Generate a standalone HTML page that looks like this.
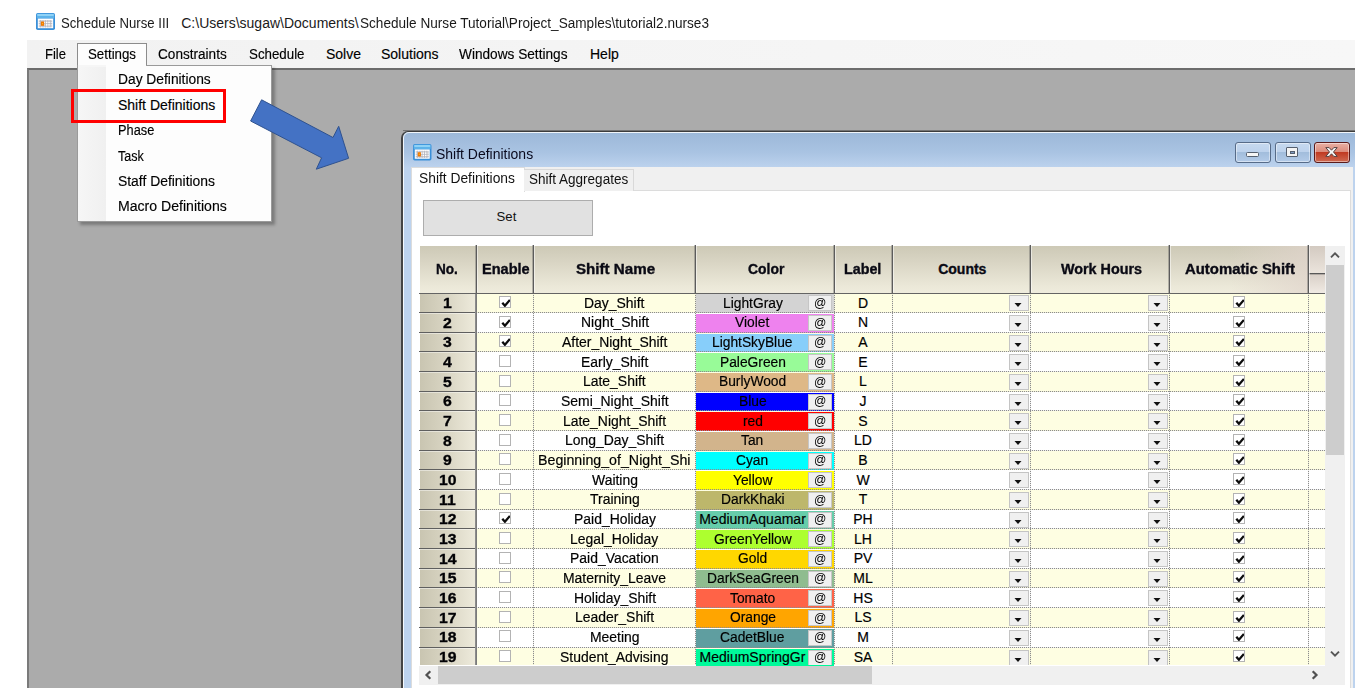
<!DOCTYPE html>
<html lang="en"><head><meta charset="utf-8"><title>Schedule Nurse III - Shift Definitions</title>
<style>
html,body{margin:0;padding:0;background:#fff;}
body{width:1359px;height:693px;position:relative;overflow:hidden;font-family:"Liberation Sans",sans-serif;}
#root div,#root span,#root svg{position:absolute;box-sizing:border-box;}
.t{white-space:nowrap;line-height:1;transform-origin:0 50%;display:block;}
.hb{-webkit-text-stroke:0.35px #0a0a14;}
.ct{-webkit-text-stroke:0.18px #000;}
.mt{-webkit-text-stroke:0.15px #000;}
</style></head><body><div id="root" style="position:absolute;left:0;top:0;width:1359px;height:693px;overflow:hidden">
<svg style="left:36px;top:13px" width="19" height="17" viewBox="0 0 19 17">
<rect x="0" y="0" width="19" height="17" rx="1.8" fill="#3a8fd8"/>
<rect x="0.8" y="0.8" width="17.4" height="4.6" rx="1" fill="#5db3ea"/>
<rect x="1.2" y="1" width="16.6" height="2" rx="0.8" fill="#8fd2f6"/>
<rect x="1.8" y="5.6" width="15.4" height="9.6" fill="#ffffff"/>
<rect x="2.8" y="7" width="13.4" height="7.4" fill="#e9e9ec"/>
<g stroke="#b4b4bc" stroke-width="0.8"><path d="M2.8 8.2H16.2M2.8 10.6H16.2M2.8 13H16.2M4.6 7V14.4M7 7V14.4M9.4 7V14.4M11.8 7V14.4M14.2 7V14.4"/></g>
<g fill="#ffffff"><rect x="5.2" y="8.8" width="1.3" height="1.3"/><rect x="7.6" y="8.8" width="1.3" height="1.3"/><rect x="10" y="8.8" width="1.3" height="1.3"/><rect x="12.4" y="8.8" width="1.3" height="1.3"/><rect x="10" y="11.2" width="1.3" height="1.3"/><rect x="12.4" y="11.2" width="1.3" height="1.3"/></g>
<rect x="4.9" y="8.5" width="3.2" height="4.3" fill="#f07800"/>
<rect x="5.9" y="10" width="1.2" height="1.2" fill="#ffb020"/>
</svg>
<span class="t " style="left:61.25px;top:15.75px;font-size:14px;color:#1a1a1a;transform:scaleX(0.9399);">Schedule Nurse III</span>
<span class="t " style="left:181.25px;top:15.75px;font-size:14px;color:#1a1a1a;">C:\Users\sugaw\Documents\</span>
<span class="t " style="left:359.70px;top:15.75px;font-size:14px;color:#1a1a1a;transform:scaleX(0.9707);">Schedule Nurse Tutorial\Project_Samples\tutorial2.nurse3</span>
<div style="left:27px;top:40px;width:1328px;height:28px;background:linear-gradient(90deg,#f2f2f2,#f7f7f7);"></div>
<div style="left:27px;top:68px;width:1328px;height:620px;background:#ababab;border-top:2px solid #6c6c6c;border-left:2px solid #7a7a7a;"></div>
<div style="left:77px;top:43px;width:70px;height:24px;background:#fdfdfd;border:1px solid #8c8c8c;border-bottom:none;"></div>
<span class="t mt" style="left:44.50px;top:47.05px;font-size:14px;transform:scaleX(0.9309);">File</span>
<span class="t mt" style="left:87.50px;top:47.05px;font-size:14px;transform:scaleX(0.9489);">Settings</span>
<span class="t mt" style="left:158.00px;top:47.05px;font-size:14px;transform:scaleX(0.9709);">Constraints</span>
<span class="t mt" style="left:248.75px;top:47.05px;font-size:14px;transform:scaleX(0.9507);">Schedule</span>
<span class="t mt" style="left:326.00px;top:47.05px;font-size:14px;">Solve</span>
<span class="t mt" style="left:381.00px;top:47.05px;font-size:14px;">Solutions</span>
<span class="t mt" style="left:459.00px;top:47.05px;font-size:14px;transform:scaleX(0.9751);">Windows Settings</span>
<span class="t mt" style="left:590.00px;top:47.05px;font-size:14px;">Help</span>
<div style="left:80px;top:68px;width:195px;height:157px;background:rgba(0,0,0,0.28);filter:blur(1.5px);"></div>
<div style="left:77px;top:65px;width:195px;height:157px;background:#fdfdfd;border:1px solid #9a9a9a;"></div>
<div style="left:147px;top:65px;width:124px;height:1px;background:#9a9a9a;"></div>
<div style="left:78px;top:66px;width:28px;height:155px;background:linear-gradient(90deg,#f6f6f6,#f0f0f0);"></div>
<div style="left:78px;top:65px;width:68px;height:2px;background:#fdfdfd;"></div>
<div style="left:78px;top:65px;width:28px;height:2px;background:#f6f6f6;"></div>
<span class="t mt" style="left:118.00px;top:72.35px;font-size:14px;transform:scaleX(0.9851);">Day Definitions</span>
<span class="t mt" style="left:118.00px;top:97.65px;font-size:14px;">Shift Definitions</span>
<span class="t mt" style="left:118.00px;top:123.15px;font-size:14px;transform:scaleX(0.9132);">Phase</span>
<span class="t mt" style="left:118.00px;top:148.85px;font-size:14px;transform:scaleX(0.8945);">Task</span>
<span class="t mt" style="left:118.00px;top:173.95px;font-size:14px;transform:scaleX(0.9919);">Staff Definitions</span>
<span class="t mt" style="left:118.00px;top:199.35px;font-size:14px;transform:scaleX(1.0055);">Macro Definitions</span>
<div style="left:71px;top:89px;width:155px;height:34px;border:3px solid #ff0000;"></div>
<svg style="left:240px;top:90px" width="120" height="90" viewBox="240 90 120 90">
<polygon points="261.6,99.8 333,137.5 338.7,126.3 348.6,158.3 316.3,169.2 321.6,157.8 250.6,121" fill="#4472c4" stroke="#2f528f" stroke-width="1" stroke-linejoin="miter"/>
</svg>
<div style="left:401px;top:130px;width:954px;height:558px;overflow:hidden;">
<div style="left:2px;top:0px;width:960px;height:1px;background:#747474;"></div>
<div style="left:0px;top:1px;width:970px;height:580px;background:linear-gradient(180deg,#9cb8d8 0px,#a9c3e2 20px,#bdd3ee 36px,#bdd3ee 100%);border:1px solid #3c3c3c;border-left:2px solid #444;border-radius:7px;"></div>
<div style="left:2px;top:2px;width:967px;height:578px;border:1px solid rgba(255,255,255,0.85);border-radius:6px;"></div>
<div style="left:0;top:0;width:0;height:0">
</div>
<svg style="left:12px;top:14px" width="18.5" height="16.5" viewBox="0 0 19 17">
<rect x="0" y="0" width="19" height="17" rx="1.8" fill="#3a8fd8"/>
<rect x="0.8" y="0.8" width="17.4" height="4.6" rx="1" fill="#5db3ea"/>
<rect x="1.2" y="1" width="16.6" height="2" rx="0.8" fill="#8fd2f6"/>
<rect x="1.8" y="5.6" width="15.4" height="9.6" fill="#ffffff"/>
<rect x="2.8" y="7" width="13.4" height="7.4" fill="#e9e9ec"/>
<g stroke="#b4b4bc" stroke-width="0.8"><path d="M2.8 8.2H16.2M2.8 10.6H16.2M2.8 13H16.2M4.6 7V14.4M7 7V14.4M9.4 7V14.4M11.8 7V14.4M14.2 7V14.4"/></g>
<g fill="#ffffff"><rect x="5.2" y="8.8" width="1.3" height="1.3"/><rect x="7.6" y="8.8" width="1.3" height="1.3"/><rect x="10" y="8.8" width="1.3" height="1.3"/><rect x="12.4" y="8.8" width="1.3" height="1.3"/><rect x="10" y="11.2" width="1.3" height="1.3"/><rect x="12.4" y="11.2" width="1.3" height="1.3"/></g>
<rect x="4.9" y="8.5" width="3.2" height="4.3" fill="#f07800"/>
<rect x="5.9" y="10" width="1.2" height="1.2" fill="#ffb020"/>
</svg>
<span class="t " style="left:34.60px;top:15.83px;font-size:15.2px;color:#0a0a1e;transform:scaleX(0.9204);">Shift Definitions</span>
<div style="left:834px;top:12px;width:36px;height:21px;background:linear-gradient(180deg,#c6d9ef 0%,#bdd2ec 45%,#a2bddc 50%,#b3cbe8 100%);border:1px solid #566b88;border-radius:3px;box-shadow:inset 0 0 0 1px rgba(255,255,255,0.45);"></div>
<div style="left:873.5px;top:12px;width:36px;height:21px;background:linear-gradient(180deg,#c6d9ef 0%,#bdd2ec 45%,#a2bddc 50%,#b3cbe8 100%);border:1px solid #566b88;border-radius:3px;box-shadow:inset 0 0 0 1px rgba(255,255,255,0.45);"></div>
<div style="left:912.5px;top:12px;width:36px;height:21px;background:linear-gradient(180deg,#e9b0a4 0%,#dc8c7c 45%,#c03a22 50%,#cf6a52 100%);border:1px solid #5a1a1a;border-radius:3px;box-shadow:inset 0 0 0 1px rgba(255,255,255,0.45);"></div>
<div style="left:845px;top:21.5px;width:13px;height:5.5px;background:#f6f6f6;border:1px solid #555f6e;border-radius:1.5px;"></div>
<div style="left:885px;top:17px;width:12px;height:10px;background:#f4f4f4;border:1px solid #555f6e;border-radius:1px;"></div>
<div style="left:888.5px;top:20.5px;width:5px;height:3px;background:#7f9cc4;border:1px solid #555f6e;"></div>
<svg style="left:923px;top:16px" width="15" height="12" viewBox="0 0 15 12"><path d="M1.8 1.6H5.2L7.5 4.2L9.8 1.6H13.2L9.5 6L13.2 10.4H9.8L7.5 7.8L5.2 10.4H1.8L5.5 6Z" fill="#f6f6f6" stroke="#55403f" stroke-width="1" stroke-linejoin="round"/></svg>
<div style="left:10px;top:37px;width:942px;height:540px;background:#f0f0f0;"></div>
<div style="left:10px;top:60px;width:939.5px;height:520px;background:#fff;border:1px solid #dcdcdc;"></div>
<div style="left:10px;top:37px;width:113.5px;height:24.5px;background:#fff;border:1px solid #dcdcdc;border-bottom:none;"></div>
<div style="left:123px;top:39px;width:109.7px;height:21.5px;background:#f0f0f0;border:1px solid #d9d9d9;border-bottom:none;border-left:none;"></div>
<span class="t " style="left:18.20px;top:40.51px;font-size:14.4px;color:#111;transform:scaleX(0.9595);">Shift Definitions</span>
<span class="t " style="left:128.20px;top:43.02px;font-size:13.8px;color:#111;transform:scaleX(0.9795);">Shift Aggregates</span>
<div style="left:22px;top:70px;width:170px;height:36px;background:#e1e1e1;border:1px solid #adadad;"></div>
<span class="t " style="left:95.50px;top:80.33px;font-size:13.2px;color:#111;">Set</span>
<div style="left:19px;top:116px;width:905px;height:47.39999999999998px;background:linear-gradient(180deg,#cdc9b6 0%,#d9d5c4 35%,#ebe8d8 85%,#efecdd 100%);"></div>
<div style="left:829px;top:116px;width:95px;height:47.39999999999998px;background:linear-gradient(90deg,rgba(224,212,204,0) 0%,rgba(224,212,204,0.6) 70%,rgba(224,212,204,0.9) 100%);"></div>
<div style="left:908px;top:116px;width:16px;height:27px;background:linear-gradient(180deg,#d3cac1,#ebe4dc);"></div>
<div style="left:908px;top:145px;width:16px;height:18px;background:linear-gradient(180deg,#dad1c9,#f0eae3);"></div>
<div style="left:908px;top:143px;width:16px;height:1px;background:#585858;"></div>
<div style="left:908px;top:144px;width:16px;height:1px;background:rgba(90,90,90,0.35);"></div>
<div style="left:908px;top:116px;width:16px;height:4px;background:rgba(255,255,255,0.0);"></div>
<div style="left:75px;top:163px;width:849px;height:20px;background:#fefee2;"></div>
<div style="left:19px;top:163px;width:56px;height:20px;background:linear-gradient(90deg,#c9c5b1 0%,#d8d4c2 45%,#eeebdc 100%);"></div>
<div style="left:75px;top:183px;width:849px;height:20px;background:#ffffff;"></div>
<div style="left:19px;top:183px;width:56px;height:20px;background:linear-gradient(90deg,#c9c5b1 0%,#d8d4c2 45%,#eeebdc 100%);"></div>
<div style="left:75px;top:203px;width:849px;height:19px;background:#fefee2;"></div>
<div style="left:19px;top:203px;width:56px;height:19px;background:linear-gradient(90deg,#c9c5b1 0%,#d8d4c2 45%,#eeebdc 100%);"></div>
<div style="left:75px;top:222px;width:849px;height:20px;background:#ffffff;"></div>
<div style="left:19px;top:222px;width:56px;height:20px;background:linear-gradient(90deg,#c9c5b1 0%,#d8d4c2 45%,#eeebdc 100%);"></div>
<div style="left:75px;top:242px;width:849px;height:20px;background:#fefee2;"></div>
<div style="left:19px;top:242px;width:56px;height:20px;background:linear-gradient(90deg,#c9c5b1 0%,#d8d4c2 45%,#eeebdc 100%);"></div>
<div style="left:75px;top:262px;width:849px;height:19px;background:#ffffff;"></div>
<div style="left:19px;top:262px;width:56px;height:19px;background:linear-gradient(90deg,#c9c5b1 0%,#d8d4c2 45%,#eeebdc 100%);"></div>
<div style="left:75px;top:281px;width:849px;height:20px;background:#fefee2;"></div>
<div style="left:19px;top:281px;width:56px;height:20px;background:linear-gradient(90deg,#c9c5b1 0%,#d8d4c2 45%,#eeebdc 100%);"></div>
<div style="left:75px;top:301px;width:849px;height:20px;background:#ffffff;"></div>
<div style="left:19px;top:301px;width:56px;height:20px;background:linear-gradient(90deg,#c9c5b1 0%,#d8d4c2 45%,#eeebdc 100%);"></div>
<div style="left:75px;top:321px;width:849px;height:19px;background:#fefee2;"></div>
<div style="left:19px;top:321px;width:56px;height:19px;background:linear-gradient(90deg,#c9c5b1 0%,#d8d4c2 45%,#eeebdc 100%);"></div>
<div style="left:75px;top:340px;width:849px;height:20px;background:#ffffff;"></div>
<div style="left:19px;top:340px;width:56px;height:20px;background:linear-gradient(90deg,#c9c5b1 0%,#d8d4c2 45%,#eeebdc 100%);"></div>
<div style="left:75px;top:360px;width:849px;height:20px;background:#fefee2;"></div>
<div style="left:19px;top:360px;width:56px;height:20px;background:linear-gradient(90deg,#c9c5b1 0%,#d8d4c2 45%,#eeebdc 100%);"></div>
<div style="left:75px;top:380px;width:849px;height:19px;background:#ffffff;"></div>
<div style="left:19px;top:380px;width:56px;height:19px;background:linear-gradient(90deg,#c9c5b1 0%,#d8d4c2 45%,#eeebdc 100%);"></div>
<div style="left:75px;top:399px;width:849px;height:20px;background:#fefee2;"></div>
<div style="left:19px;top:399px;width:56px;height:20px;background:linear-gradient(90deg,#c9c5b1 0%,#d8d4c2 45%,#eeebdc 100%);"></div>
<div style="left:75px;top:419px;width:849px;height:20px;background:#ffffff;"></div>
<div style="left:19px;top:419px;width:56px;height:20px;background:linear-gradient(90deg,#c9c5b1 0%,#d8d4c2 45%,#eeebdc 100%);"></div>
<div style="left:75px;top:439px;width:849px;height:19px;background:#fefee2;"></div>
<div style="left:19px;top:439px;width:56px;height:19px;background:linear-gradient(90deg,#c9c5b1 0%,#d8d4c2 45%,#eeebdc 100%);"></div>
<div style="left:75px;top:458px;width:849px;height:20px;background:#ffffff;"></div>
<div style="left:19px;top:458px;width:56px;height:20px;background:linear-gradient(90deg,#c9c5b1 0%,#d8d4c2 45%,#eeebdc 100%);"></div>
<div style="left:75px;top:478px;width:849px;height:20px;background:#fefee2;"></div>
<div style="left:19px;top:478px;width:56px;height:20px;background:linear-gradient(90deg,#c9c5b1 0%,#d8d4c2 45%,#eeebdc 100%);"></div>
<div style="left:75px;top:498px;width:849px;height:20px;background:#ffffff;"></div>
<div style="left:19px;top:498px;width:56px;height:20px;background:linear-gradient(90deg,#c9c5b1 0%,#d8d4c2 45%,#eeebdc 100%);"></div>
<div style="left:75px;top:518px;width:849px;height:17.299999999999955px;background:#fefee2;"></div>
<div style="left:19px;top:518px;width:56px;height:17.299999999999955px;background:linear-gradient(90deg,#c9c5b1 0%,#d8d4c2 45%,#eeebdc 100%);"></div>
<div style="left:295px;top:164px;width:138px;height:19px;background:#d3d3d3;"></div>
<div style="left:407px;top:165px;width:24px;height:16px;background:#f0f0f0;border:1px solid #c6c6c6;"></div>
<div style="left:98px;top:166px;width:12px;height:12px;background:#fff;border:1px solid #b3b3b3;overflow:hidden;"><svg style="left:1px;top:1px" width="10" height="10" viewBox="0 0 10 10"><path d="M1.3 4.7L3.9 7.7L8.9 1.9" fill="none" stroke="#0c0c0c" stroke-width="2.3" stroke-linejoin="miter"/></svg></div>
<div style="left:831.5px;top:166px;width:12px;height:12px;background:#fff;border:1px solid #b3b3b3;overflow:hidden;"><svg style="left:1px;top:1px" width="10" height="10" viewBox="0 0 10 10"><path d="M1.3 4.7L3.9 7.7L8.9 1.9" fill="none" stroke="#0c0c0c" stroke-width="2.3" stroke-linejoin="miter"/></svg></div>
<div style="left:608px;top:165px;width:20px;height:16px;background:#f0f0f0;border:1px solid #c4c4c4;overflow:hidden;"><svg style="left:4.3px;top:6.8px" width="8" height="4" viewBox="0 0 8 4"><path d="M0.5 0H7.5L4 4Z" fill="#111"/></svg></div>
<div style="left:747px;top:165px;width:20px;height:16px;background:#f0f0f0;border:1px solid #c4c4c4;overflow:hidden;"><svg style="left:4.3px;top:6.8px" width="8" height="4" viewBox="0 0 8 4"><path d="M0.5 0H7.5L4 4Z" fill="#111"/></svg></div>
<span class="t hb" style="left:42.41px;top:166.04px;font-size:14.9px;font-weight:bold;transform:scaleX(1.0600);">1</span>
<span class="t ct" style="left:183.40px;top:165.70px;font-size:14px;transform:scaleX(0.9950);">Day_Shift</span>
<span class="t ct" style="left:321.61px;top:165.70px;font-size:14px;transform:scaleX(0.9850);">LightGray</span>
<span class="t " style="left:412.63px;top:165.92px;font-size:13.5px;transform:scaleX(0.9000);">@</span>
<span class="t ct" style="left:456.94px;top:165.70px;font-size:14px;">D</span>
<div style="left:295px;top:184px;width:138px;height:19px;background:#ee82ee;"></div>
<div style="left:407px;top:185px;width:24px;height:16px;background:#f0f0f0;border:1px solid #c6c6c6;"></div>
<div style="left:98px;top:186px;width:12px;height:12px;background:#fff;border:1px solid #b3b3b3;overflow:hidden;"><svg style="left:1px;top:1px" width="10" height="10" viewBox="0 0 10 10"><path d="M1.3 4.7L3.9 7.7L8.9 1.9" fill="none" stroke="#0c0c0c" stroke-width="2.3" stroke-linejoin="miter"/></svg></div>
<div style="left:831.5px;top:186px;width:12px;height:12px;background:#fff;border:1px solid #b3b3b3;overflow:hidden;"><svg style="left:1px;top:1px" width="10" height="10" viewBox="0 0 10 10"><path d="M1.3 4.7L3.9 7.7L8.9 1.9" fill="none" stroke="#0c0c0c" stroke-width="2.3" stroke-linejoin="miter"/></svg></div>
<div style="left:608px;top:185px;width:20px;height:16px;background:#f0f0f0;border:1px solid #c4c4c4;overflow:hidden;"><svg style="left:4.3px;top:6.8px" width="8" height="4" viewBox="0 0 8 4"><path d="M0.5 0H7.5L4 4Z" fill="#111"/></svg></div>
<div style="left:747px;top:185px;width:20px;height:16px;background:#f0f0f0;border:1px solid #c4c4c4;overflow:hidden;"><svg style="left:4.3px;top:6.8px" width="8" height="4" viewBox="0 0 8 4"><path d="M0.5 0H7.5L4 4Z" fill="#111"/></svg></div>
<span class="t hb" style="left:42.41px;top:185.71px;font-size:14.9px;font-weight:bold;transform:scaleX(1.0600);">2</span>
<span class="t ct" style="left:179.53px;top:185.37px;font-size:14px;transform:scaleX(0.9950);">Night_Shift</span>
<span class="t ct" style="left:334.38px;top:185.37px;font-size:14px;transform:scaleX(0.9850);">Violet</span>
<span class="t " style="left:412.63px;top:185.59px;font-size:13.5px;transform:scaleX(0.9000);">@</span>
<span class="t ct" style="left:456.94px;top:185.37px;font-size:14px;">N</span>
<div style="left:295px;top:204px;width:138px;height:18px;background:#87cefa;"></div>
<div style="left:407px;top:205px;width:24px;height:16px;background:#f0f0f0;border:1px solid #c6c6c6;"></div>
<div style="left:98px;top:205px;width:12px;height:12px;background:#fff;border:1px solid #b3b3b3;overflow:hidden;"><svg style="left:1px;top:1px" width="10" height="10" viewBox="0 0 10 10"><path d="M1.3 4.7L3.9 7.7L8.9 1.9" fill="none" stroke="#0c0c0c" stroke-width="2.3" stroke-linejoin="miter"/></svg></div>
<div style="left:831.5px;top:205px;width:12px;height:12px;background:#fff;border:1px solid #b3b3b3;overflow:hidden;"><svg style="left:1px;top:1px" width="10" height="10" viewBox="0 0 10 10"><path d="M1.3 4.7L3.9 7.7L8.9 1.9" fill="none" stroke="#0c0c0c" stroke-width="2.3" stroke-linejoin="miter"/></svg></div>
<div style="left:608px;top:205px;width:20px;height:16px;background:#f0f0f0;border:1px solid #c4c4c4;overflow:hidden;"><svg style="left:4.3px;top:6.8px" width="8" height="4" viewBox="0 0 8 4"><path d="M0.5 0H7.5L4 4Z" fill="#111"/></svg></div>
<div style="left:747px;top:205px;width:20px;height:16px;background:#f0f0f0;border:1px solid #c4c4c4;overflow:hidden;"><svg style="left:4.3px;top:6.8px" width="8" height="4" viewBox="0 0 8 4"><path d="M0.5 0H7.5L4 4Z" fill="#111"/></svg></div>
<span class="t hb" style="left:42.41px;top:205.38px;font-size:14.9px;font-weight:bold;transform:scaleX(1.0600);">3</span>
<span class="t ct" style="left:160.95px;top:205.04px;font-size:14px;transform:scaleX(0.9950);">After_Night_Shift</span>
<span class="t ct" style="left:311.25px;top:205.04px;font-size:14px;transform:scaleX(0.9850);">LightSkyBlue</span>
<span class="t " style="left:412.63px;top:205.26px;font-size:13.5px;transform:scaleX(0.9000);">@</span>
<span class="t ct" style="left:457.33px;top:205.04px;font-size:14px;">A</span>
<div style="left:295px;top:223px;width:138px;height:19px;background:#98fb98;"></div>
<div style="left:407px;top:224px;width:24px;height:16px;background:#f0f0f0;border:1px solid #c6c6c6;"></div>
<div style="left:98px;top:225px;width:12px;height:12px;background:#fff;border:1px solid #b3b3b3;overflow:hidden;"></div>
<div style="left:831.5px;top:225px;width:12px;height:12px;background:#fff;border:1px solid #b3b3b3;overflow:hidden;"><svg style="left:1px;top:1px" width="10" height="10" viewBox="0 0 10 10"><path d="M1.3 4.7L3.9 7.7L8.9 1.9" fill="none" stroke="#0c0c0c" stroke-width="2.3" stroke-linejoin="miter"/></svg></div>
<div style="left:608px;top:224px;width:20px;height:16px;background:#f0f0f0;border:1px solid #c4c4c4;overflow:hidden;"><svg style="left:4.3px;top:6.8px" width="8" height="4" viewBox="0 0 8 4"><path d="M0.5 0H7.5L4 4Z" fill="#111"/></svg></div>
<div style="left:747px;top:224px;width:20px;height:16px;background:#f0f0f0;border:1px solid #c4c4c4;overflow:hidden;"><svg style="left:4.3px;top:6.8px" width="8" height="4" viewBox="0 0 8 4"><path d="M0.5 0H7.5L4 4Z" fill="#111"/></svg></div>
<span class="t hb" style="left:42.41px;top:225.05px;font-size:14.9px;font-weight:bold;transform:scaleX(1.0600);">4</span>
<span class="t ct" style="left:179.92px;top:224.71px;font-size:14px;transform:scaleX(0.9950);">Early_Shift</span>
<span class="t ct" style="left:318.54px;top:224.71px;font-size:14px;transform:scaleX(0.9850);">PaleGreen</span>
<span class="t " style="left:412.63px;top:224.93px;font-size:13.5px;transform:scaleX(0.9000);">@</span>
<span class="t ct" style="left:457.33px;top:224.71px;font-size:14px;">E</span>
<div style="left:295px;top:243px;width:138px;height:19px;background:#deb887;"></div>
<div style="left:407px;top:244px;width:24px;height:16px;background:#f0f0f0;border:1px solid #c6c6c6;"></div>
<div style="left:98px;top:245px;width:12px;height:12px;background:#fff;border:1px solid #b3b3b3;overflow:hidden;"></div>
<div style="left:831.5px;top:245px;width:12px;height:12px;background:#fff;border:1px solid #b3b3b3;overflow:hidden;"><svg style="left:1px;top:1px" width="10" height="10" viewBox="0 0 10 10"><path d="M1.3 4.7L3.9 7.7L8.9 1.9" fill="none" stroke="#0c0c0c" stroke-width="2.3" stroke-linejoin="miter"/></svg></div>
<div style="left:608px;top:244px;width:20px;height:16px;background:#f0f0f0;border:1px solid #c4c4c4;overflow:hidden;"><svg style="left:4.3px;top:6.8px" width="8" height="4" viewBox="0 0 8 4"><path d="M0.5 0H7.5L4 4Z" fill="#111"/></svg></div>
<div style="left:747px;top:244px;width:20px;height:16px;background:#f0f0f0;border:1px solid #c4c4c4;overflow:hidden;"><svg style="left:4.3px;top:6.8px" width="8" height="4" viewBox="0 0 8 4"><path d="M0.5 0H7.5L4 4Z" fill="#111"/></svg></div>
<span class="t hb" style="left:42.41px;top:244.72px;font-size:14.9px;font-weight:bold;transform:scaleX(1.0600);">5</span>
<span class="t ct" style="left:182.23px;top:244.38px;font-size:14px;transform:scaleX(0.9950);">Late_Shift</span>
<span class="t ct" style="left:317.90px;top:244.38px;font-size:14px;transform:scaleX(0.9850);">BurlyWood</span>
<span class="t " style="left:412.63px;top:244.60px;font-size:13.5px;transform:scaleX(0.9000);">@</span>
<span class="t ct" style="left:458.11px;top:244.38px;font-size:14px;">L</span>
<div style="left:295px;top:263px;width:138px;height:18px;background:#0000ff;"></div>
<div style="left:407px;top:264px;width:24px;height:16px;background:#f0f0f0;border:1px solid #c6c6c6;"></div>
<div style="left:98px;top:264px;width:12px;height:12px;background:#fff;border:1px solid #b3b3b3;overflow:hidden;"></div>
<div style="left:831.5px;top:264px;width:12px;height:12px;background:#fff;border:1px solid #b3b3b3;overflow:hidden;"><svg style="left:1px;top:1px" width="10" height="10" viewBox="0 0 10 10"><path d="M1.3 4.7L3.9 7.7L8.9 1.9" fill="none" stroke="#0c0c0c" stroke-width="2.3" stroke-linejoin="miter"/></svg></div>
<div style="left:608px;top:264px;width:20px;height:16px;background:#f0f0f0;border:1px solid #c4c4c4;overflow:hidden;"><svg style="left:4.3px;top:6.8px" width="8" height="4" viewBox="0 0 8 4"><path d="M0.5 0H7.5L4 4Z" fill="#111"/></svg></div>
<div style="left:747px;top:264px;width:20px;height:16px;background:#f0f0f0;border:1px solid #c4c4c4;overflow:hidden;"><svg style="left:4.3px;top:6.8px" width="8" height="4" viewBox="0 0 8 4"><path d="M0.5 0H7.5L4 4Z" fill="#111"/></svg></div>
<span class="t hb" style="left:42.41px;top:264.39px;font-size:14.9px;font-weight:bold;transform:scaleX(1.0600);">6</span>
<span class="t ct" style="left:159.79px;top:264.05px;font-size:14px;transform:scaleX(0.9950);">Semi_Night_Shift</span>
<span class="t ct" style="left:337.70px;top:264.05px;font-size:14px;transform:scaleX(0.9850);">Blue</span>
<span class="t " style="left:412.63px;top:264.27px;font-size:13.5px;transform:scaleX(0.9000);">@</span>
<span class="t ct" style="left:458.50px;top:264.05px;font-size:14px;">J</span>
<div style="left:295px;top:282px;width:138px;height:19px;background:#ff0000;"></div>
<div style="left:407px;top:283px;width:24px;height:16px;background:#f0f0f0;border:1px solid #c6c6c6;"></div>
<div style="left:98px;top:284px;width:12px;height:12px;background:#fff;border:1px solid #b3b3b3;overflow:hidden;"></div>
<div style="left:831.5px;top:284px;width:12px;height:12px;background:#fff;border:1px solid #b3b3b3;overflow:hidden;"><svg style="left:1px;top:1px" width="10" height="10" viewBox="0 0 10 10"><path d="M1.3 4.7L3.9 7.7L8.9 1.9" fill="none" stroke="#0c0c0c" stroke-width="2.3" stroke-linejoin="miter"/></svg></div>
<div style="left:608px;top:283px;width:20px;height:16px;background:#f0f0f0;border:1px solid #c4c4c4;overflow:hidden;"><svg style="left:4.3px;top:6.8px" width="8" height="4" viewBox="0 0 8 4"><path d="M0.5 0H7.5L4 4Z" fill="#111"/></svg></div>
<div style="left:747px;top:283px;width:20px;height:16px;background:#f0f0f0;border:1px solid #c4c4c4;overflow:hidden;"><svg style="left:4.3px;top:6.8px" width="8" height="4" viewBox="0 0 8 4"><path d="M0.5 0H7.5L4 4Z" fill="#111"/></svg></div>
<span class="t hb" style="left:42.41px;top:284.06px;font-size:14.9px;font-weight:bold;transform:scaleX(1.0600);">7</span>
<span class="t ct" style="left:162.10px;top:283.72px;font-size:14px;transform:scaleX(0.9950);">Late_Night_Shift</span>
<span class="t ct" style="left:341.53px;top:283.72px;font-size:14px;transform:scaleX(0.9850);">red</span>
<span class="t " style="left:412.63px;top:283.94px;font-size:13.5px;transform:scaleX(0.9000);">@</span>
<span class="t ct" style="left:457.33px;top:283.72px;font-size:14px;">S</span>
<div style="left:295px;top:302px;width:138px;height:19px;background:#d2b48c;"></div>
<div style="left:407px;top:303px;width:24px;height:16px;background:#f0f0f0;border:1px solid #c6c6c6;"></div>
<div style="left:98px;top:304px;width:12px;height:12px;background:#fff;border:1px solid #b3b3b3;overflow:hidden;"></div>
<div style="left:831.5px;top:304px;width:12px;height:12px;background:#fff;border:1px solid #b3b3b3;overflow:hidden;"><svg style="left:1px;top:1px" width="10" height="10" viewBox="0 0 10 10"><path d="M1.3 4.7L3.9 7.7L8.9 1.9" fill="none" stroke="#0c0c0c" stroke-width="2.3" stroke-linejoin="miter"/></svg></div>
<div style="left:608px;top:303px;width:20px;height:16px;background:#f0f0f0;border:1px solid #c4c4c4;overflow:hidden;"><svg style="left:4.3px;top:6.8px" width="8" height="4" viewBox="0 0 8 4"><path d="M0.5 0H7.5L4 4Z" fill="#111"/></svg></div>
<div style="left:747px;top:303px;width:20px;height:16px;background:#f0f0f0;border:1px solid #c4c4c4;overflow:hidden;"><svg style="left:4.3px;top:6.8px" width="8" height="4" viewBox="0 0 8 4"><path d="M0.5 0H7.5L4 4Z" fill="#111"/></svg></div>
<span class="t hb" style="left:42.41px;top:303.73px;font-size:14.9px;font-weight:bold;transform:scaleX(1.0600);">8</span>
<span class="t ct" style="left:164.03px;top:303.39px;font-size:14px;transform:scaleX(0.9950);">Long_Day_Shift</span>
<span class="t ct" style="left:340.38px;top:303.39px;font-size:14px;transform:scaleX(0.9850);">Tan</span>
<span class="t " style="left:412.63px;top:303.61px;font-size:13.5px;transform:scaleX(0.9000);">@</span>
<span class="t ct" style="left:453.05px;top:303.39px;font-size:14px;">LD</span>
<div style="left:295px;top:322px;width:138px;height:18px;background:#00ffff;"></div>
<div style="left:407px;top:323px;width:24px;height:16px;background:#f0f0f0;border:1px solid #c6c6c6;"></div>
<div style="left:98px;top:323px;width:12px;height:12px;background:#fff;border:1px solid #b3b3b3;overflow:hidden;"></div>
<div style="left:831.5px;top:323px;width:12px;height:12px;background:#fff;border:1px solid #b3b3b3;overflow:hidden;"><svg style="left:1px;top:1px" width="10" height="10" viewBox="0 0 10 10"><path d="M1.3 4.7L3.9 7.7L8.9 1.9" fill="none" stroke="#0c0c0c" stroke-width="2.3" stroke-linejoin="miter"/></svg></div>
<div style="left:608px;top:323px;width:20px;height:16px;background:#f0f0f0;border:1px solid #c4c4c4;overflow:hidden;"><svg style="left:4.3px;top:6.8px" width="8" height="4" viewBox="0 0 8 4"><path d="M0.5 0H7.5L4 4Z" fill="#111"/></svg></div>
<div style="left:747px;top:323px;width:20px;height:16px;background:#f0f0f0;border:1px solid #c4c4c4;overflow:hidden;"><svg style="left:4.3px;top:6.8px" width="8" height="4" viewBox="0 0 8 4"><path d="M0.5 0H7.5L4 4Z" fill="#111"/></svg></div>
<span class="t hb" style="left:42.41px;top:323.40px;font-size:14.9px;font-weight:bold;transform:scaleX(1.0600);">9</span>
<span class="t ct" style="left:137.36px;top:323.06px;font-size:14px;transform:scaleX(1.0150);">Beginning_of_Night_Shi</span>
<span class="t ct" style="left:335.40px;top:323.06px;font-size:14px;transform:scaleX(0.9850);">Cyan</span>
<span class="t " style="left:412.63px;top:323.28px;font-size:13.5px;transform:scaleX(0.9000);">@</span>
<span class="t ct" style="left:457.33px;top:323.06px;font-size:14px;">B</span>
<div style="left:295px;top:341px;width:138px;height:19px;background:#ffff00;"></div>
<div style="left:407px;top:342px;width:24px;height:16px;background:#f0f0f0;border:1px solid #c6c6c6;"></div>
<div style="left:98px;top:343px;width:12px;height:12px;background:#fff;border:1px solid #b3b3b3;overflow:hidden;"></div>
<div style="left:831.5px;top:343px;width:12px;height:12px;background:#fff;border:1px solid #b3b3b3;overflow:hidden;"><svg style="left:1px;top:1px" width="10" height="10" viewBox="0 0 10 10"><path d="M1.3 4.7L3.9 7.7L8.9 1.9" fill="none" stroke="#0c0c0c" stroke-width="2.3" stroke-linejoin="miter"/></svg></div>
<div style="left:608px;top:342px;width:20px;height:16px;background:#f0f0f0;border:1px solid #c4c4c4;overflow:hidden;"><svg style="left:4.3px;top:6.8px" width="8" height="4" viewBox="0 0 8 4"><path d="M0.5 0H7.5L4 4Z" fill="#111"/></svg></div>
<div style="left:747px;top:342px;width:20px;height:16px;background:#f0f0f0;border:1px solid #c4c4c4;overflow:hidden;"><svg style="left:4.3px;top:6.8px" width="8" height="4" viewBox="0 0 8 4"><path d="M0.5 0H7.5L4 4Z" fill="#111"/></svg></div>
<span class="t hb" style="left:38.02px;top:343.07px;font-size:14.9px;font-weight:bold;transform:scaleX(1.0600);">10</span>
<span class="t ct" style="left:190.63px;top:342.73px;font-size:14px;transform:scaleX(0.9950);">Waiting</span>
<span class="t ct" style="left:331.82px;top:342.73px;font-size:14px;transform:scaleX(0.9850);">Yellow</span>
<span class="t " style="left:412.63px;top:342.95px;font-size:13.5px;transform:scaleX(0.9000);">@</span>
<span class="t ct" style="left:455.39px;top:342.73px;font-size:14px;">W</span>
<div style="left:295px;top:361px;width:138px;height:19px;background:#bdb76b;"></div>
<div style="left:407px;top:362px;width:24px;height:16px;background:#f0f0f0;border:1px solid #c6c6c6;"></div>
<div style="left:98px;top:363px;width:12px;height:12px;background:#fff;border:1px solid #b3b3b3;overflow:hidden;"></div>
<div style="left:831.5px;top:363px;width:12px;height:12px;background:#fff;border:1px solid #b3b3b3;overflow:hidden;"><svg style="left:1px;top:1px" width="10" height="10" viewBox="0 0 10 10"><path d="M1.3 4.7L3.9 7.7L8.9 1.9" fill="none" stroke="#0c0c0c" stroke-width="2.3" stroke-linejoin="miter"/></svg></div>
<div style="left:608px;top:362px;width:20px;height:16px;background:#f0f0f0;border:1px solid #c4c4c4;overflow:hidden;"><svg style="left:4.3px;top:6.8px" width="8" height="4" viewBox="0 0 8 4"><path d="M0.5 0H7.5L4 4Z" fill="#111"/></svg></div>
<div style="left:747px;top:362px;width:20px;height:16px;background:#f0f0f0;border:1px solid #c4c4c4;overflow:hidden;"><svg style="left:4.3px;top:6.8px" width="8" height="4" viewBox="0 0 8 4"><path d="M0.5 0H7.5L4 4Z" fill="#111"/></svg></div>
<span class="t hb" style="left:38.45px;top:362.74px;font-size:14.9px;font-weight:bold;transform:scaleX(1.0600);">11</span>
<span class="t ct" style="left:188.69px;top:362.40px;font-size:14px;transform:scaleX(0.9950);">Training</span>
<span class="t ct" style="left:319.69px;top:362.40px;font-size:14px;transform:scaleX(0.9850);">DarkKhaki</span>
<span class="t " style="left:412.63px;top:362.62px;font-size:13.5px;transform:scaleX(0.9000);">@</span>
<span class="t ct" style="left:457.72px;top:362.40px;font-size:14px;">T</span>
<div style="left:295px;top:381px;width:138px;height:18px;background:#66cdaa;"></div>
<div style="left:407px;top:382px;width:24px;height:16px;background:#f0f0f0;border:1px solid #c6c6c6;"></div>
<div style="left:98px;top:382px;width:12px;height:12px;background:#fff;border:1px solid #b3b3b3;overflow:hidden;"><svg style="left:1px;top:1px" width="10" height="10" viewBox="0 0 10 10"><path d="M1.3 4.7L3.9 7.7L8.9 1.9" fill="none" stroke="#0c0c0c" stroke-width="2.3" stroke-linejoin="miter"/></svg></div>
<div style="left:831.5px;top:382px;width:12px;height:12px;background:#fff;border:1px solid #b3b3b3;overflow:hidden;"><svg style="left:1px;top:1px" width="10" height="10" viewBox="0 0 10 10"><path d="M1.3 4.7L3.9 7.7L8.9 1.9" fill="none" stroke="#0c0c0c" stroke-width="2.3" stroke-linejoin="miter"/></svg></div>
<div style="left:608px;top:382px;width:20px;height:16px;background:#f0f0f0;border:1px solid #c4c4c4;overflow:hidden;"><svg style="left:4.3px;top:6.8px" width="8" height="4" viewBox="0 0 8 4"><path d="M0.5 0H7.5L4 4Z" fill="#111"/></svg></div>
<div style="left:747px;top:382px;width:20px;height:16px;background:#f0f0f0;border:1px solid #c4c4c4;overflow:hidden;"><svg style="left:4.3px;top:6.8px" width="8" height="4" viewBox="0 0 8 4"><path d="M0.5 0H7.5L4 4Z" fill="#111"/></svg></div>
<span class="t hb" style="left:38.02px;top:382.41px;font-size:14.9px;font-weight:bold;transform:scaleX(1.0600);">12</span>
<span class="t ct" style="left:172.56px;top:382.07px;font-size:14px;transform:scaleX(0.9950);">Paid_Holiday</span>
<span class="t ct" style="left:298.20px;top:382.07px;font-size:14px;">MediumAquamar</span>
<span class="t " style="left:412.63px;top:382.29px;font-size:13.5px;transform:scaleX(0.9000);">@</span>
<span class="t ct" style="left:452.28px;top:382.07px;font-size:14px;">PH</span>
<div style="left:295px;top:400px;width:138px;height:19px;background:#adff2f;"></div>
<div style="left:407px;top:401px;width:24px;height:16px;background:#f0f0f0;border:1px solid #c6c6c6;"></div>
<div style="left:98px;top:402px;width:12px;height:12px;background:#fff;border:1px solid #b3b3b3;overflow:hidden;"></div>
<div style="left:831.5px;top:402px;width:12px;height:12px;background:#fff;border:1px solid #b3b3b3;overflow:hidden;"><svg style="left:1px;top:1px" width="10" height="10" viewBox="0 0 10 10"><path d="M1.3 4.7L3.9 7.7L8.9 1.9" fill="none" stroke="#0c0c0c" stroke-width="2.3" stroke-linejoin="miter"/></svg></div>
<div style="left:608px;top:401px;width:20px;height:16px;background:#f0f0f0;border:1px solid #c4c4c4;overflow:hidden;"><svg style="left:4.3px;top:6.8px" width="8" height="4" viewBox="0 0 8 4"><path d="M0.5 0H7.5L4 4Z" fill="#111"/></svg></div>
<div style="left:747px;top:401px;width:20px;height:16px;background:#f0f0f0;border:1px solid #c4c4c4;overflow:hidden;"><svg style="left:4.3px;top:6.8px" width="8" height="4" viewBox="0 0 8 4"><path d="M0.5 0H7.5L4 4Z" fill="#111"/></svg></div>
<span class="t hb" style="left:38.02px;top:402.08px;font-size:14.9px;font-weight:bold;transform:scaleX(1.0600);">13</span>
<span class="t ct" style="left:169.45px;top:401.74px;font-size:14px;transform:scaleX(0.9950);">Legal_Holiday</span>
<span class="t ct" style="left:312.66px;top:401.74px;font-size:14px;transform:scaleX(0.9850);">GreenYellow</span>
<span class="t " style="left:412.63px;top:401.96px;font-size:13.5px;transform:scaleX(0.9000);">@</span>
<span class="t ct" style="left:453.05px;top:401.74px;font-size:14px;">LH</span>
<div style="left:295px;top:420px;width:138px;height:19px;background:#ffd700;"></div>
<div style="left:407px;top:421px;width:24px;height:16px;background:#f0f0f0;border:1px solid #c6c6c6;"></div>
<div style="left:98px;top:422px;width:12px;height:12px;background:#fff;border:1px solid #b3b3b3;overflow:hidden;"></div>
<div style="left:831.5px;top:422px;width:12px;height:12px;background:#fff;border:1px solid #b3b3b3;overflow:hidden;"><svg style="left:1px;top:1px" width="10" height="10" viewBox="0 0 10 10"><path d="M1.3 4.7L3.9 7.7L8.9 1.9" fill="none" stroke="#0c0c0c" stroke-width="2.3" stroke-linejoin="miter"/></svg></div>
<div style="left:608px;top:421px;width:20px;height:16px;background:#f0f0f0;border:1px solid #c4c4c4;overflow:hidden;"><svg style="left:4.3px;top:6.8px" width="8" height="4" viewBox="0 0 8 4"><path d="M0.5 0H7.5L4 4Z" fill="#111"/></svg></div>
<div style="left:747px;top:421px;width:20px;height:16px;background:#f0f0f0;border:1px solid #c4c4c4;overflow:hidden;"><svg style="left:4.3px;top:6.8px" width="8" height="4" viewBox="0 0 8 4"><path d="M0.5 0H7.5L4 4Z" fill="#111"/></svg></div>
<span class="t hb" style="left:38.02px;top:421.75px;font-size:14.9px;font-weight:bold;transform:scaleX(1.0600);">14</span>
<span class="t ct" style="left:169.20px;top:421.41px;font-size:14px;transform:scaleX(0.9950);">Paid_Vacation</span>
<span class="t ct" style="left:336.94px;top:421.41px;font-size:14px;transform:scaleX(0.9850);">Gold</span>
<span class="t " style="left:412.63px;top:421.63px;font-size:13.5px;transform:scaleX(0.9000);">@</span>
<span class="t ct" style="left:452.66px;top:421.41px;font-size:14px;">PV</span>
<div style="left:295px;top:440px;width:138px;height:18px;background:#8fbc8f;"></div>
<div style="left:407px;top:441px;width:24px;height:16px;background:#f0f0f0;border:1px solid #c6c6c6;"></div>
<div style="left:98px;top:441px;width:12px;height:12px;background:#fff;border:1px solid #b3b3b3;overflow:hidden;"></div>
<div style="left:831.5px;top:441px;width:12px;height:12px;background:#fff;border:1px solid #b3b3b3;overflow:hidden;"><svg style="left:1px;top:1px" width="10" height="10" viewBox="0 0 10 10"><path d="M1.3 4.7L3.9 7.7L8.9 1.9" fill="none" stroke="#0c0c0c" stroke-width="2.3" stroke-linejoin="miter"/></svg></div>
<div style="left:608px;top:441px;width:20px;height:16px;background:#f0f0f0;border:1px solid #c4c4c4;overflow:hidden;"><svg style="left:4.3px;top:6.8px" width="8" height="4" viewBox="0 0 8 4"><path d="M0.5 0H7.5L4 4Z" fill="#111"/></svg></div>
<div style="left:747px;top:441px;width:20px;height:16px;background:#f0f0f0;border:1px solid #c4c4c4;overflow:hidden;"><svg style="left:4.3px;top:6.8px" width="8" height="4" viewBox="0 0 8 4"><path d="M0.5 0H7.5L4 4Z" fill="#111"/></svg></div>
<span class="t hb" style="left:38.02px;top:441.42px;font-size:14.9px;font-weight:bold;transform:scaleX(1.0600);">15</span>
<span class="t ct" style="left:162.11px;top:441.08px;font-size:14px;transform:scaleX(0.9950);">Maternity_Leave</span>
<span class="t ct" style="left:305.51px;top:441.08px;font-size:14px;transform:scaleX(0.9850);">DarkSeaGreen</span>
<span class="t " style="left:412.63px;top:441.30px;font-size:13.5px;transform:scaleX(0.9000);">@</span>
<span class="t ct" style="left:452.28px;top:441.08px;font-size:14px;">ML</span>
<div style="left:295px;top:459px;width:138px;height:19px;background:#ff6347;"></div>
<div style="left:407px;top:460px;width:24px;height:16px;background:#f0f0f0;border:1px solid #c6c6c6;"></div>
<div style="left:98px;top:461px;width:12px;height:12px;background:#fff;border:1px solid #b3b3b3;overflow:hidden;"></div>
<div style="left:831.5px;top:461px;width:12px;height:12px;background:#fff;border:1px solid #b3b3b3;overflow:hidden;"><svg style="left:1px;top:1px" width="10" height="10" viewBox="0 0 10 10"><path d="M1.3 4.7L3.9 7.7L8.9 1.9" fill="none" stroke="#0c0c0c" stroke-width="2.3" stroke-linejoin="miter"/></svg></div>
<div style="left:608px;top:460px;width:20px;height:16px;background:#f0f0f0;border:1px solid #c4c4c4;overflow:hidden;"><svg style="left:4.3px;top:6.8px" width="8" height="4" viewBox="0 0 8 4"><path d="M0.5 0H7.5L4 4Z" fill="#111"/></svg></div>
<div style="left:747px;top:460px;width:20px;height:16px;background:#f0f0f0;border:1px solid #c4c4c4;overflow:hidden;"><svg style="left:4.3px;top:6.8px" width="8" height="4" viewBox="0 0 8 4"><path d="M0.5 0H7.5L4 4Z" fill="#111"/></svg></div>
<span class="t hb" style="left:38.02px;top:461.09px;font-size:14.9px;font-weight:bold;transform:scaleX(1.0600);">16</span>
<span class="t ct" style="left:172.56px;top:460.75px;font-size:14px;transform:scaleX(0.9950);">Holiday_Shift</span>
<span class="t ct" style="left:328.89px;top:460.75px;font-size:14px;transform:scaleX(0.9850);">Tomato</span>
<span class="t " style="left:412.63px;top:460.97px;font-size:13.5px;transform:scaleX(0.9000);">@</span>
<span class="t ct" style="left:452.28px;top:460.75px;font-size:14px;">HS</span>
<div style="left:295px;top:479px;width:138px;height:19px;background:#ffa500;"></div>
<div style="left:407px;top:480px;width:24px;height:16px;background:#f0f0f0;border:1px solid #c6c6c6;"></div>
<div style="left:98px;top:481px;width:12px;height:12px;background:#fff;border:1px solid #b3b3b3;overflow:hidden;"></div>
<div style="left:831.5px;top:481px;width:12px;height:12px;background:#fff;border:1px solid #b3b3b3;overflow:hidden;"><svg style="left:1px;top:1px" width="10" height="10" viewBox="0 0 10 10"><path d="M1.3 4.7L3.9 7.7L8.9 1.9" fill="none" stroke="#0c0c0c" stroke-width="2.3" stroke-linejoin="miter"/></svg></div>
<div style="left:608px;top:480px;width:20px;height:16px;background:#f0f0f0;border:1px solid #c4c4c4;overflow:hidden;"><svg style="left:4.3px;top:6.8px" width="8" height="4" viewBox="0 0 8 4"><path d="M0.5 0H7.5L4 4Z" fill="#111"/></svg></div>
<div style="left:747px;top:480px;width:20px;height:16px;background:#f0f0f0;border:1px solid #c4c4c4;overflow:hidden;"><svg style="left:4.3px;top:6.8px" width="8" height="4" viewBox="0 0 8 4"><path d="M0.5 0H7.5L4 4Z" fill="#111"/></svg></div>
<span class="t hb" style="left:38.02px;top:480.76px;font-size:14.9px;font-weight:bold;transform:scaleX(1.0600);">17</span>
<span class="t ct" style="left:174.10px;top:480.42px;font-size:14px;transform:scaleX(0.9950);">Leader_Shift</span>
<span class="t ct" style="left:328.50px;top:480.42px;font-size:14px;transform:scaleX(0.9850);">Orange</span>
<span class="t " style="left:412.63px;top:480.64px;font-size:13.5px;transform:scaleX(0.9000);">@</span>
<span class="t ct" style="left:453.44px;top:480.42px;font-size:14px;">LS</span>
<div style="left:295px;top:499px;width:138px;height:19px;background:#5f9ea0;"></div>
<div style="left:407px;top:500px;width:24px;height:16px;background:#f0f0f0;border:1px solid #c6c6c6;"></div>
<div style="left:98px;top:500px;width:12px;height:12px;background:#fff;border:1px solid #b3b3b3;overflow:hidden;"></div>
<div style="left:831.5px;top:500px;width:12px;height:12px;background:#fff;border:1px solid #b3b3b3;overflow:hidden;"><svg style="left:1px;top:1px" width="10" height="10" viewBox="0 0 10 10"><path d="M1.3 4.7L3.9 7.7L8.9 1.9" fill="none" stroke="#0c0c0c" stroke-width="2.3" stroke-linejoin="miter"/></svg></div>
<div style="left:608px;top:500px;width:20px;height:16px;background:#f0f0f0;border:1px solid #c4c4c4;overflow:hidden;"><svg style="left:4.3px;top:6.8px" width="8" height="4" viewBox="0 0 8 4"><path d="M0.5 0H7.5L4 4Z" fill="#111"/></svg></div>
<div style="left:747px;top:500px;width:20px;height:16px;background:#f0f0f0;border:1px solid #c4c4c4;overflow:hidden;"><svg style="left:4.3px;top:6.8px" width="8" height="4" viewBox="0 0 8 4"><path d="M0.5 0H7.5L4 4Z" fill="#111"/></svg></div>
<span class="t hb" style="left:38.02px;top:500.43px;font-size:14.9px;font-weight:bold;transform:scaleX(1.0600);">18</span>
<span class="t ct" style="left:188.82px;top:500.09px;font-size:14px;transform:scaleX(0.9950);">Meeting</span>
<span class="t ct" style="left:319.30px;top:500.09px;font-size:14px;transform:scaleX(0.9850);">CadetBlue</span>
<span class="t " style="left:412.63px;top:500.31px;font-size:13.5px;transform:scaleX(0.9000);">@</span>
<span class="t ct" style="left:456.17px;top:500.09px;font-size:14px;">M</span>
<div style="left:295px;top:519px;width:138px;height:17.299999999999955px;background:#00fa9a;"></div>
<div style="left:407px;top:520px;width:24px;height:15.299999999999955px;background:#f0f0f0;border:1px solid #c6c6c6;border-bottom:none;"></div>
<div style="left:98px;top:520px;width:12px;height:12px;background:#fff;border:1px solid #b3b3b3;overflow:hidden;"></div>
<div style="left:831.5px;top:520px;width:12px;height:12px;background:#fff;border:1px solid #b3b3b3;overflow:hidden;"><svg style="left:1px;top:1px" width="10" height="10" viewBox="0 0 10 10"><path d="M1.3 4.7L3.9 7.7L8.9 1.9" fill="none" stroke="#0c0c0c" stroke-width="2.3" stroke-linejoin="miter"/></svg></div>
<div style="left:608px;top:520px;width:20px;height:15.299999999999955px;background:#f0f0f0;border:1px solid #c4c4c4;border-bottom:none;overflow:hidden;"><svg style="left:4.3px;top:6.8px" width="8" height="4" viewBox="0 0 8 4"><path d="M0.5 0H7.5L4 4Z" fill="#111"/></svg></div>
<div style="left:747px;top:520px;width:20px;height:15.299999999999955px;background:#f0f0f0;border:1px solid #c4c4c4;border-bottom:none;overflow:hidden;"><svg style="left:4.3px;top:6.8px" width="8" height="4" viewBox="0 0 8 4"><path d="M0.5 0H7.5L4 4Z" fill="#111"/></svg></div>
<div style="left:19px;top:518px;width:905px;height:17.299999999999955px;overflow:hidden;">
<span class="t hb" style="left:19.02px;top:2.10px;font-size:14.9px;font-weight:bold;transform:scaleX(1.0600);">19</span>
<span class="t ct" style="left:140.39px;top:1.76px;font-size:14px;transform:scaleX(0.9950);">Student_Advising</span>
<span class="t ct" style="left:279.59px;top:1.76px;font-size:14px;">MediumSpringGr</span>
<span class="t " style="left:393.63px;top:1.98px;font-size:13.5px;transform:scaleX(0.9000);">@</span>
<span class="t ct" style="left:433.66px;top:1.76px;font-size:14px;">SA</span>
</div>
<div style="left:75px;top:182px;width:849px;height:1px;background:repeating-linear-gradient(90deg,#8c8c8c 0 1px,rgba(140,140,140,0.15) 1px 2px);"></div>
<div style="left:18px;top:182px;width:57px;height:1px;background:#5f5f5f;"></div>
<div style="left:19px;top:183px;width:55px;height:1px;background:rgba(255,255,255,0.45);"></div>
<div style="left:75px;top:202px;width:849px;height:1px;background:repeating-linear-gradient(90deg,#8c8c8c 0 1px,rgba(140,140,140,0.15) 1px 2px);"></div>
<div style="left:18px;top:202px;width:57px;height:1px;background:#5f5f5f;"></div>
<div style="left:19px;top:203px;width:55px;height:1px;background:rgba(255,255,255,0.45);"></div>
<div style="left:75px;top:221px;width:849px;height:1px;background:repeating-linear-gradient(90deg,#8c8c8c 0 1px,rgba(140,140,140,0.15) 1px 2px);"></div>
<div style="left:18px;top:221px;width:57px;height:1px;background:#5f5f5f;"></div>
<div style="left:19px;top:222px;width:55px;height:1px;background:rgba(255,255,255,0.45);"></div>
<div style="left:75px;top:241px;width:849px;height:1px;background:repeating-linear-gradient(90deg,#8c8c8c 0 1px,rgba(140,140,140,0.15) 1px 2px);"></div>
<div style="left:18px;top:241px;width:57px;height:1px;background:#5f5f5f;"></div>
<div style="left:19px;top:242px;width:55px;height:1px;background:rgba(255,255,255,0.45);"></div>
<div style="left:75px;top:261px;width:849px;height:1px;background:repeating-linear-gradient(90deg,#8c8c8c 0 1px,rgba(140,140,140,0.15) 1px 2px);"></div>
<div style="left:18px;top:261px;width:57px;height:1px;background:#5f5f5f;"></div>
<div style="left:19px;top:262px;width:55px;height:1px;background:rgba(255,255,255,0.45);"></div>
<div style="left:75px;top:280px;width:849px;height:1px;background:repeating-linear-gradient(90deg,#8c8c8c 0 1px,rgba(140,140,140,0.15) 1px 2px);"></div>
<div style="left:18px;top:280px;width:57px;height:1px;background:#5f5f5f;"></div>
<div style="left:19px;top:281px;width:55px;height:1px;background:rgba(255,255,255,0.45);"></div>
<div style="left:75px;top:300px;width:849px;height:1px;background:repeating-linear-gradient(90deg,#8c8c8c 0 1px,rgba(140,140,140,0.15) 1px 2px);"></div>
<div style="left:18px;top:300px;width:57px;height:1px;background:#5f5f5f;"></div>
<div style="left:19px;top:301px;width:55px;height:1px;background:rgba(255,255,255,0.45);"></div>
<div style="left:75px;top:320px;width:849px;height:1px;background:repeating-linear-gradient(90deg,#8c8c8c 0 1px,rgba(140,140,140,0.15) 1px 2px);"></div>
<div style="left:18px;top:320px;width:57px;height:1px;background:#5f5f5f;"></div>
<div style="left:19px;top:321px;width:55px;height:1px;background:rgba(255,255,255,0.45);"></div>
<div style="left:75px;top:339px;width:849px;height:1px;background:repeating-linear-gradient(90deg,#8c8c8c 0 1px,rgba(140,140,140,0.15) 1px 2px);"></div>
<div style="left:18px;top:339px;width:57px;height:1px;background:#5f5f5f;"></div>
<div style="left:19px;top:340px;width:55px;height:1px;background:rgba(255,255,255,0.45);"></div>
<div style="left:75px;top:359px;width:849px;height:1px;background:repeating-linear-gradient(90deg,#8c8c8c 0 1px,rgba(140,140,140,0.15) 1px 2px);"></div>
<div style="left:18px;top:359px;width:57px;height:1px;background:#5f5f5f;"></div>
<div style="left:19px;top:360px;width:55px;height:1px;background:rgba(255,255,255,0.45);"></div>
<div style="left:75px;top:379px;width:849px;height:1px;background:repeating-linear-gradient(90deg,#8c8c8c 0 1px,rgba(140,140,140,0.15) 1px 2px);"></div>
<div style="left:18px;top:379px;width:57px;height:1px;background:#5f5f5f;"></div>
<div style="left:19px;top:380px;width:55px;height:1px;background:rgba(255,255,255,0.45);"></div>
<div style="left:75px;top:398px;width:849px;height:1px;background:repeating-linear-gradient(90deg,#8c8c8c 0 1px,rgba(140,140,140,0.15) 1px 2px);"></div>
<div style="left:18px;top:398px;width:57px;height:1px;background:#5f5f5f;"></div>
<div style="left:19px;top:399px;width:55px;height:1px;background:rgba(255,255,255,0.45);"></div>
<div style="left:75px;top:418px;width:849px;height:1px;background:repeating-linear-gradient(90deg,#8c8c8c 0 1px,rgba(140,140,140,0.15) 1px 2px);"></div>
<div style="left:18px;top:418px;width:57px;height:1px;background:#5f5f5f;"></div>
<div style="left:19px;top:419px;width:55px;height:1px;background:rgba(255,255,255,0.45);"></div>
<div style="left:75px;top:438px;width:849px;height:1px;background:repeating-linear-gradient(90deg,#8c8c8c 0 1px,rgba(140,140,140,0.15) 1px 2px);"></div>
<div style="left:18px;top:438px;width:57px;height:1px;background:#5f5f5f;"></div>
<div style="left:19px;top:439px;width:55px;height:1px;background:rgba(255,255,255,0.45);"></div>
<div style="left:75px;top:457px;width:849px;height:1px;background:repeating-linear-gradient(90deg,#8c8c8c 0 1px,rgba(140,140,140,0.15) 1px 2px);"></div>
<div style="left:18px;top:457px;width:57px;height:1px;background:#5f5f5f;"></div>
<div style="left:19px;top:458px;width:55px;height:1px;background:rgba(255,255,255,0.45);"></div>
<div style="left:75px;top:477px;width:849px;height:1px;background:repeating-linear-gradient(90deg,#8c8c8c 0 1px,rgba(140,140,140,0.15) 1px 2px);"></div>
<div style="left:18px;top:477px;width:57px;height:1px;background:#5f5f5f;"></div>
<div style="left:19px;top:478px;width:55px;height:1px;background:rgba(255,255,255,0.45);"></div>
<div style="left:75px;top:497px;width:849px;height:1px;background:repeating-linear-gradient(90deg,#8c8c8c 0 1px,rgba(140,140,140,0.15) 1px 2px);"></div>
<div style="left:18px;top:497px;width:57px;height:1px;background:#5f5f5f;"></div>
<div style="left:19px;top:498px;width:55px;height:1px;background:rgba(255,255,255,0.45);"></div>
<div style="left:75px;top:517px;width:849px;height:1px;background:repeating-linear-gradient(90deg,#8c8c8c 0 1px,rgba(140,140,140,0.15) 1px 2px);"></div>
<div style="left:18px;top:517px;width:57px;height:1px;background:#5f5f5f;"></div>
<div style="left:19px;top:518px;width:55px;height:1px;background:rgba(255,255,255,0.45);"></div>
<div style="left:132px;top:163.39999999999998px;width:1px;height:371.9px;background:repeating-linear-gradient(180deg,#8c8c8c 0 1px,rgba(140,140,140,0.15) 1px 2px);"></div>
<div style="left:294px;top:163.39999999999998px;width:1px;height:371.9px;background:repeating-linear-gradient(180deg,#8c8c8c 0 1px,rgba(140,140,140,0.15) 1px 2px);"></div>
<div style="left:433px;top:163.39999999999998px;width:1px;height:371.9px;background:repeating-linear-gradient(180deg,#8c8c8c 0 1px,rgba(140,140,140,0.15) 1px 2px);"></div>
<div style="left:491px;top:163.39999999999998px;width:1px;height:371.9px;background:repeating-linear-gradient(180deg,#8c8c8c 0 1px,rgba(140,140,140,0.15) 1px 2px);"></div>
<div style="left:629px;top:163.39999999999998px;width:1px;height:371.9px;background:repeating-linear-gradient(180deg,#8c8c8c 0 1px,rgba(140,140,140,0.15) 1px 2px);"></div>
<div style="left:768px;top:163.39999999999998px;width:1px;height:371.9px;background:repeating-linear-gradient(180deg,#8c8c8c 0 1px,rgba(140,140,140,0.15) 1px 2px);"></div>
<div style="left:907px;top:163.39999999999998px;width:1px;height:371.9px;background:repeating-linear-gradient(180deg,#8c8c8c 0 1px,rgba(140,140,140,0.15) 1px 2px);"></div>
<div style="left:75px;top:115px;width:1px;height:48.39999999999998px;background:#5c5c5c;"></div>
<div style="left:74px;top:115px;width:1px;height:48.39999999999998px;background:rgba(90,90,90,0.38);"></div>
<div style="left:76px;top:116px;width:1px;height:46.39999999999998px;background:rgba(255,255,255,0.5);"></div>
<div style="left:132px;top:115px;width:1px;height:48.39999999999998px;background:#5c5c5c;"></div>
<div style="left:131px;top:115px;width:1px;height:48.39999999999998px;background:rgba(90,90,90,0.38);"></div>
<div style="left:133px;top:116px;width:1px;height:46.39999999999998px;background:rgba(255,255,255,0.5);"></div>
<div style="left:294px;top:115px;width:1px;height:48.39999999999998px;background:#5c5c5c;"></div>
<div style="left:293px;top:115px;width:1px;height:48.39999999999998px;background:rgba(90,90,90,0.38);"></div>
<div style="left:295px;top:116px;width:1px;height:46.39999999999998px;background:rgba(255,255,255,0.5);"></div>
<div style="left:433px;top:115px;width:1px;height:48.39999999999998px;background:#5c5c5c;"></div>
<div style="left:432px;top:115px;width:1px;height:48.39999999999998px;background:rgba(90,90,90,0.38);"></div>
<div style="left:434px;top:116px;width:1px;height:46.39999999999998px;background:rgba(255,255,255,0.5);"></div>
<div style="left:491px;top:115px;width:1px;height:48.39999999999998px;background:#5c5c5c;"></div>
<div style="left:490px;top:115px;width:1px;height:48.39999999999998px;background:rgba(90,90,90,0.38);"></div>
<div style="left:492px;top:116px;width:1px;height:46.39999999999998px;background:rgba(255,255,255,0.5);"></div>
<div style="left:629px;top:115px;width:1px;height:48.39999999999998px;background:#5c5c5c;"></div>
<div style="left:628px;top:115px;width:1px;height:48.39999999999998px;background:rgba(90,90,90,0.38);"></div>
<div style="left:630px;top:116px;width:1px;height:46.39999999999998px;background:rgba(255,255,255,0.5);"></div>
<div style="left:768px;top:115px;width:1px;height:48.39999999999998px;background:#5c5c5c;"></div>
<div style="left:767px;top:115px;width:1px;height:48.39999999999998px;background:rgba(90,90,90,0.38);"></div>
<div style="left:769px;top:116px;width:1px;height:46.39999999999998px;background:rgba(255,255,255,0.5);"></div>
<div style="left:907px;top:115px;width:1px;height:48.39999999999998px;background:#5c5c5c;"></div>
<div style="left:906px;top:115px;width:1px;height:48.39999999999998px;background:rgba(90,90,90,0.38);"></div>
<div style="left:908px;top:116px;width:1px;height:46.39999999999998px;background:rgba(255,255,255,0.5);"></div>
<div style="left:75px;top:163.39999999999998px;width:1px;height:371.9px;background:#7a7a7a;"></div>
<div style="left:74px;top:163.39999999999998px;width:1px;height:371.9px;background:#8c8c8c;"></div>
<div style="left:18px;top:162.7px;width:906px;height:1.6px;background:#646464;"></div>
<span class="t hb" style="left:35.45px;top:132.25px;font-size:14px;font-weight:bold;color:#0a0a14;transform:scaleX(0.9711);">No.</span>
<span class="t hb" style="left:81.35px;top:132.25px;font-size:14px;font-weight:bold;color:#0a0a14;transform:scaleX(1.0391);">Enable</span>
<span class="t hb" style="left:174.85px;top:132.25px;font-size:14px;font-weight:bold;color:#0a0a14;transform:scaleX(1.0817);">Shift Name</span>
<span class="t hb" style="left:347.05px;top:132.25px;font-size:14px;font-weight:bold;color:#0a0a14;transform:scaleX(0.9931);">Color</span>
<span class="t hb" style="left:443.35px;top:132.25px;font-size:14px;font-weight:bold;color:#0a0a14;transform:scaleX(1.0201);">Label</span>
<span class="t hb" style="left:537.20px;top:132.25px;font-size:14px;font-weight:bold;color:#0a0a14;">Counts</span>
<span class="t hb" style="left:659.50px;top:132.25px;font-size:14px;font-weight:bold;color:#0a0a14;transform:scaleX(1.0242);">Work Hours</span>
<span class="t hb" style="left:783.90px;top:132.25px;font-size:14px;font-weight:bold;color:#0a0a14;transform:scaleX(1.0634);">Automatic Shift</span>
<div style="left:924px;top:115.5px;width:19.5px;height:420px;background:#f0f0f0;"></div>
<div style="left:925px;top:135px;width:17.5px;height:189.5px;background:#cdcdcd;"></div>
<svg style="left:928px;top:121px" width="12" height="8" viewBox="0 0 12 8"><path d="M2 6.3L6 2.3L10 6.3" fill="none" stroke="#555" stroke-width="1.9"/></svg>
<svg style="left:928px;top:519.5px" width="12" height="8" viewBox="0 0 12 8"><path d="M2 1.7L6 5.7L10 1.7" fill="none" stroke="#555" stroke-width="1.9"/></svg>
<div style="left:18px;top:535.5px;width:925.5px;height:19px;background:#f0f0f0;"></div>
<div style="left:37px;top:536.3px;width:434px;height:17.4px;background:#cdcdcd;"></div>
<svg style="left:23px;top:538.7px" width="8" height="12" viewBox="0 0 8 12"><path d="M6.3 2.2L2.5 6L6.3 9.8" fill="none" stroke="#505050" stroke-width="2.2"/></svg>
<svg style="left:910px;top:538.7px" width="8" height="12" viewBox="0 0 8 12"><path d="M1.7 2.2L5.5 6L1.7 9.8" fill="none" stroke="#505050" stroke-width="2.2"/></svg>
</div>
</div></body></html>
